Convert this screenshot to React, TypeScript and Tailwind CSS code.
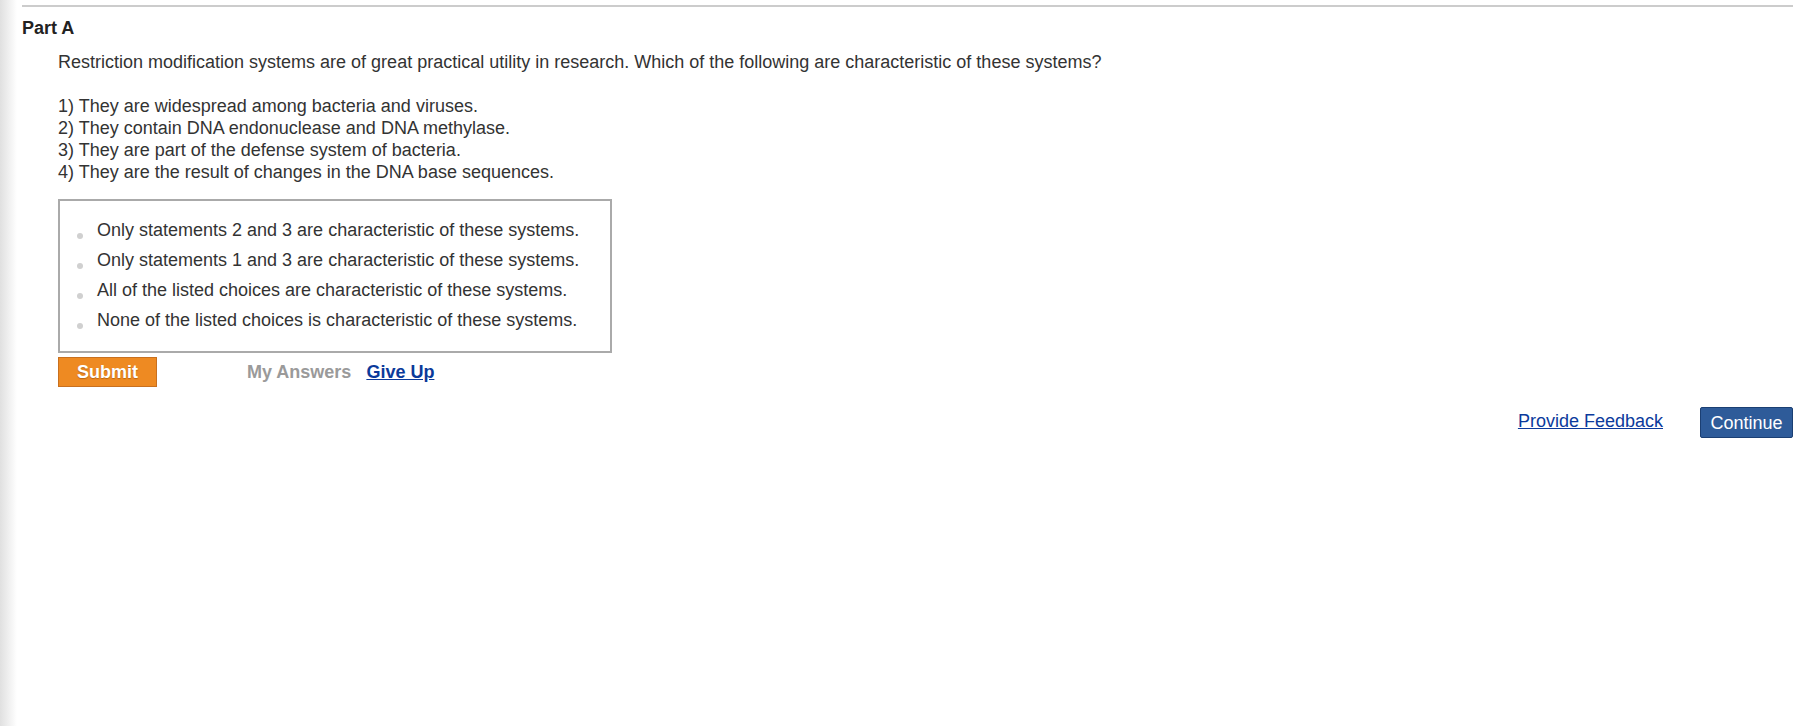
export default function App() {
  const statements = [
    '1) They are widespread among bacteria and viruses.',
    '2) They contain DNA endonuclease and DNA methylase.',
    '3) They are part of the defense system of bacteria.',
    '4) They are the result of changes in the DNA base sequences.',
  ];

  const choices = [
    'Only statements 2 and 3 are characteristic of these systems.',
    'Only statements 1 and 3 are characteristic of these systems.',
    'All of the listed choices are characteristic of these systems.',
    'None of the listed choices is characteristic of these systems.',
  ];

  return (
    <div
      className="flex h-[726px] w-full bg-white text-[18px] leading-[22px] text-[#333333]"
      style={{ fontFamily: '"Liberation Sans", Arial, sans-serif' }}
    >
      {/* left edge shadow */}
      <div className="w-[17px] shrink-0 bg-gradient-to-r from-[#e0e0e0] to-white" />

      <div className="flex-1 pl-[5px] pr-[19px]">
        <div className="mt-[5px] h-[2px] bg-[#cccccc]" />

        <h2 className="mt-[10px] font-bold text-[#222222]">Part A</h2>

        <div className="pl-[36px]">
          <p className="mt-[12px]">
            Restriction modification systems are of great practical utility in research. Which of the
            following are characteristic of these systems?
          </p>
          <div className="mt-[22px]">
            {statements.map((s) => (
              <div key={s}>{s}</div>
            ))}
          </div>

          {/* answer choices */}
          <div className="mt-[16px] w-[554px] border-2 border-[#aaaaaa] pt-[14px] pb-[16px]">
            {choices.map((c) => (
              <label key={c} className="flex h-[30px] items-start leading-[30px]">
                <span className="ml-[17px] mt-[18px] h-[6px] w-[6px] shrink-0 rounded-full bg-[#d0d0d0]" />
                <span className="ml-[14px]">{c}</span>
              </label>
            ))}
          </div>

          <div className="mt-[4px] flex items-center">
            <button className="h-[30px] w-[99px] border border-[#c8701f] bg-[#ee8a22] font-bold text-white [text-shadow:0_1px_1px_rgba(120,60,0,0.45)]">
              Submit
            </button>
            <span className="ml-[90px] font-bold text-[#9a9a9a]">My Answers</span>
            <a href="#" className="ml-[15px] font-bold text-[#0b3a9a] underline">
              Give Up
            </a>
          </div>
        </div>

        <div className="mt-[20px] flex items-start justify-end">
          <a href="#" className="mt-[3px] text-[#0b3a9c] underline">
            Provide Feedback
          </a>
          <button className="ml-[37px] h-[31px] w-[93px] rounded-[2px] border border-[#1b3f73] bg-[#2e5b99] leading-[28px] text-white">
            Continue
          </button>
        </div>
      </div>
    </div>
  );
}
